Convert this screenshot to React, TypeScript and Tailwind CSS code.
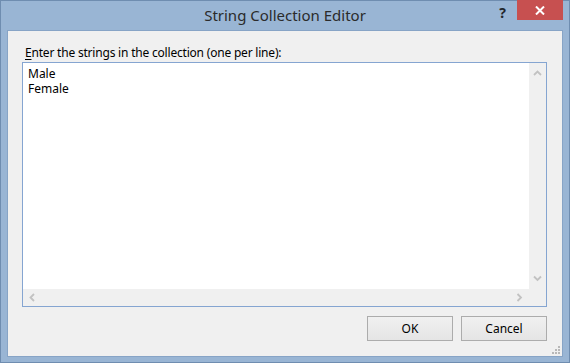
const Chevron = ({ dir }: { dir: "up" | "down" | "left" | "right" }) => {
  const d = {
    up: "M1 5 L4.5 1.5 L8 5",
    down: "M1 1.5 L4.5 5 L8 1.5",
    left: "M5 1 L1.5 4.5 L5 8",
    right: "M1.5 1 L5 4.5 L1.5 8",
  }[dir];
  const horizontal = dir === "up" || dir === "down";
  return (
    <svg
      width={horizontal ? 9 : 7}
      height={horizontal ? 7 : 9}
      viewBox={horizontal ? "0 0 9 7" : "0 0 7 9"}
    >
      <path d={d} fill="none" stroke="#c2c2c2" strokeWidth="1.8" />
    </svg>
  );
};

const SizeGrip = () => (
  <svg width="8" height="8" viewBox="0 0 8 8" className="absolute right-[2px] bottom-[2px]">
    {[
      [6, 0],
      [3, 3],
      [6, 3],
      [0, 6],
      [3, 6],
      [6, 6],
    ].map(([x, y]) => (
      <rect key={`${x}-${y}`} x={x} y={y} width="2" height="2" fill="#b8b8b8" />
    ))}
  </svg>
);

const Button = ({ label }: { label: string }) => (
  <button className="w-[86px] h-[25px] border border-[#acacac] bg-gradient-to-b from-[#f0f0f0] to-[#e5e5e5] text-[12px] text-black leading-none">
    {label}
  </button>
);

export default function App() {
  return (
    <div className="w-[570px] h-[363px] border border-[#6f8db0] bg-[#99b5d4] flex flex-col font-['Noto_Sans',sans-serif] text-black">
      {/* title bar */}
      <div className="h-[29px] flex items-start shrink-0">
        <div className="flex-1 pl-[78px] pt-[4px] text-center text-[15px] leading-[20px] text-[#2b2b2b]">
          String Collection Editor
        </div>
        <div className="w-[78px] flex items-start">
          <span className="w-[23px] pt-[3px] text-center text-[14px] font-bold leading-[18px] text-[#22262b]">?</span>
          <button className="ml-[3px] w-[46px] h-[20px] -mt-px bg-[#c75050] flex items-center justify-center">
            <svg width="10" height="9" viewBox="0 0 10 9">
              <path d="M1 0.5 L9 8.5 M9 0.5 L1 8.5" stroke="#fff" strokeWidth="2" />
            </svg>
          </button>
        </div>
      </div>

      {/* client area */}
      <div className="flex-1 mx-[6px] mb-[5px] border border-[#87a4c6] bg-[#f0f0f0] relative flex flex-col pt-[14px] pl-[14px] pr-[15px] pb-[14px]">
        <label className="pl-[3px] text-[12px] leading-[15px] tracking-[-0.2px]">
          <span className="underline underline-offset-2">E</span>nter the strings in the collection (one per line):
        </label>

        <div className="mt-[2px] h-[245px] border border-[#85a5d1] bg-white grid grid-cols-[1fr_17px] grid-rows-[1fr_17px]">
          <div className="pl-[5px] pt-[3px] text-[12px] leading-[15px]">
            <div>Male</div>
            <div>Female</div>
          </div>
          <div className="bg-[#f0f0f0] flex flex-col items-center justify-between py-[7px]">
            <Chevron dir="up" />
            <Chevron dir="down" />
          </div>
          <div className="bg-[#f0f0f0] flex items-center justify-between px-[6px]">
            <Chevron dir="left" />
            <Chevron dir="right" />
          </div>
          <div className="bg-[#f0f0f0]" />
        </div>

        <div className="mt-[9px] flex justify-end gap-[8px] pr-[0px]">
          <Button label="OK" />
          <Button label="Cancel" />
        </div>

        <SizeGrip />
      </div>
    </div>
  );
}
